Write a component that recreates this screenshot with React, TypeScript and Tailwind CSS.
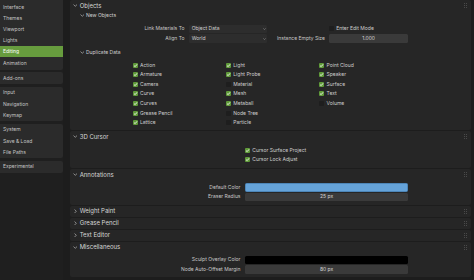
import React from "react";

function Chevron({ open }: { open: boolean }) {
  return open ? (
    <svg width="4.5" height="3" viewBox="0 0 9 6" className="shrink-0">
      <path d="M1 1.2 L4.5 4.6 L8 1.2" fill="none" stroke="#a8a8a8" strokeWidth="1.6" />
    </svg>
  ) : (
    <svg width="3" height="4.5" viewBox="0 0 6 9" className="shrink-0">
      <path d="M1.2 1 L4.6 4.5 L1.2 8" fill="none" stroke="#a8a8a8" strokeWidth="1.6" />
    </svg>
  );
}

function Grip() {
  return (
    <div className="ml-auto mr-[4px] grid grid-cols-2 gap-[1px]">
      {[0, 1, 2, 3, 4, 5].map((i) => (
        <div key={i} className="w-[1px] h-[1px] bg-[#4a4a4a]" />
      ))}
    </div>
  );
}

function Header({ title, open }: { title: string; open: boolean }) {
  return (
    <div className="h-[11px] shrink-0 flex items-center pl-[3px] text-[6px] text-[#d6d6d6]">
      <div className="w-[4.5px] flex justify-center">
        <Chevron open={open} />
      </div>
      <span className="ml-[2.2px]">{title}</span>
      <Grip />
    </div>
  );
}

function SubHeader({ title }: { title: string }) {
  return (
    <div className="h-[9.5px] shrink-0 flex items-center pl-[10px] text-[5px] text-[#d0d0d0]">
      <Chevron open />
      <span className="ml-[1.4px]">{title}</span>
    </div>
  );
}

function Check({ on }: { on: boolean }) {
  return on ? (
    <div className="w-[5px] h-[5px] shrink-0 rounded-[1px] bg-[#5f9a39] flex items-center justify-center">
      <svg width="5" height="5" viewBox="0 0 10 10">
        <path d="M2.2 5.3 L4.3 7.3 L8 2.7" fill="none" stroke="#ffffff" strokeWidth="1.7" />
      </svg>
    </div>
  ) : (
    <div className="w-[5px] h-[5px] shrink-0 rounded-[1px] bg-[#1e1e1e]" />
  );
}

function CheckItem({ on, label }: { on: boolean; label: string }) {
  return (
    <div className="h-[9.67px] flex items-center">
      <Check on={on} />
      <span className="ml-[2.3px] text-[5px] text-[#cfcfcf] whitespace-nowrap">{label}</span>
    </div>
  );
}

function Dropdown({ value }: { value: string }) {
  return (
    <div className="w-[78px] h-full rounded-[1.5px] bg-[#2d2d2d] flex items-center pl-[2.4px] pr-[1.6px] text-[5px] text-[#d0d0d0]">
      <span>{value}</span>
      <svg width="3" height="2" viewBox="0 0 6 4" className="ml-auto">
        <path d="M0.8 0.8 L3 3.2 L5.2 0.8" fill="none" stroke="#9a9a9a" strokeWidth="1.2" />
      </svg>
    </div>
  );
}

function FieldRow({ label, children }: { label: string; children: React.ReactNode }) {
  return (
    <div className="h-[8.5px] flex items-center">
      <div className="w-[170.5px] text-right text-[5px] text-[#c8c8c8] whitespace-nowrap">{label}</div>
      <div className="ml-[4.5px] w-[163.3px] h-full">{children}</div>
    </div>
  );
}

function NumField({ value }: { value: string }) {
  return (
    <div className="w-full h-full rounded-[1.5px] bg-[#3a3a3a] flex items-center justify-center text-[5px] text-[#d4d4d4]">
      {value}
    </div>
  );
}

const sideGroups: string[][] = [
  ["Interface", "Themes", "Viewport", "Lights", "Editing", "Animation"],
  ["Add-ons"],
  ["Input", "Navigation", "Keymap"],
  ["System", "Save & Load", "File Paths"],
  ["Experimental"],
];

const col1: [string, boolean][] = [
  ["Action", true],
  ["Armature", true],
  ["Camera", true],
  ["Curve", true],
  ["Curves", true],
  ["Grease Pencil", true],
  ["Lattice", true],
];
const col2: [string, boolean][] = [
  ["Light", true],
  ["Light Probe", true],
  ["Material", false],
  ["Mesh", true],
  ["Metaball", true],
  ["Node Tree", false],
  ["Particle", false],
];
const col3: [string, boolean][] = [
  ["Point Cloud", true],
  ["Speaker", true],
  ["Surface", true],
  ["Text", true],
  ["Volume", false],
];

export default function App() {
  return (
    <div className="w-[474px] h-[280px] overflow-hidden flex bg-[#1d1d1d] font-['Inter','DejaVu_Sans',sans-serif] leading-none">
      {/* Sidebar */}
      <div className="w-[63px] shrink-0 flex flex-col gap-[2.4px] bg-[#1f1f1f]">
        {sideGroups.map((g, gi) => (
          <div
            key={gi}
            className={
              gi === 0
                ? "bg-[#2b2b2b] rounded-br-[2px] pt-[1.5px] pb-[1.2px]"
                : "bg-[#2b2b2b] rounded-r-[2px] py-[0.5px]"
            }
          >
            {g.map((item) =>
              item === "Editing" ? (
                <div key={item} className="h-[11.2px] flex items-center pl-[3px] bg-[#679c3e] text-[5px] text-white">
                  {item}
                </div>
              ) : (
                <div key={item} className="h-[11.2px] flex items-center pl-[3px] text-[5px] text-[#c4c4c4]">
                  {item}
                </div>
              )
            )}
          </div>
        ))}
      </div>

      {/* Main */}
      <div className="flex-1 pl-[7px] pr-[3px] flex flex-col gap-[1px]">
        {/* Objects */}
        <div className="h-[130px] shrink-0 bg-[#262626] rounded-[2px] flex flex-col">
          <Header title="Objects" open />
          <SubHeader title="New Objects" />
          <div className="pt-[4.2px] flex flex-col gap-[1.1px]">
            <div className="h-[8.5px] flex items-center">
              <div className="w-[114.5px] text-right text-[5px] text-[#c8c8c8] whitespace-nowrap">Link Materials To</div>
              <div className="ml-[4.8px] h-full">
                <Dropdown value="Object Data" />
              </div>
              <div className="w-[61.7px]" />
              <Check on={false} />
              <span className="ml-[2.3px] text-[5px] text-[#cfcfcf] whitespace-nowrap">Enter Edit Mode</span>
            </div>
            <div className="h-[8.5px] flex items-center">
              <div className="w-[114.5px] text-right text-[5px] text-[#c8c8c8] whitespace-nowrap">Align To</div>
              <div className="ml-[4.8px] h-full">
                <Dropdown value="World" />
              </div>
              <div className="w-[57.7px] text-right text-[5px] text-[#c8c8c8] whitespace-nowrap">Instance Empty Size</div>
              <div className="ml-[4px] w-[79.3px] h-full">
                <NumField value="1.000" />
              </div>
            </div>
          </div>
          <div className="mt-[4.75px]">
            <SubHeader title="Duplicate Data" />
          </div>
          <div className="pt-[3.15px] pl-[62.7px] flex">
            <div className="w-[93.3px] flex flex-col">
              {col1.map(([l, on]) => (
                <CheckItem key={l} label={l} on={on} />
              ))}
            </div>
            <div className="w-[93.3px] flex flex-col">
              {col2.map(([l, on]) => (
                <CheckItem key={l} label={l} on={on} />
              ))}
            </div>
            <div className="w-[93.3px] flex flex-col">
              {col3.map(([l, on]) => (
                <CheckItem key={l} label={l} on={on} />
              ))}
            </div>
          </div>
        </div>

        {/* 3D Cursor */}
        <div className="shrink-0 bg-[#262626] rounded-[2px] flex flex-col pb-[3.5px]">
          <Header title="3D Cursor" open />
          <div className="pt-[3.2px] pl-[175px] flex flex-col">
            <CheckItem label="Cursor Surface Project" on />
            <CheckItem label="Cursor Lock Adjust" on />
          </div>
        </div>

        {/* Annotations */}
        <div className="shrink-0 bg-[#262626] rounded-[2px] flex flex-col pb-[3.5px]">
          <Header title="Annotations" open />
          <div className="pt-[3px] flex flex-col gap-[1px]">
            <FieldRow label="Default Color">
              <div className="w-full h-full rounded-[1.5px] bg-[#65a3d9] border-[0.5px] border-[#4d86b8]" />
            </FieldRow>
            <FieldRow label="Eraser Radius">
              <NumField value="25 px" />
            </FieldRow>
          </div>
        </div>

        <div className="shrink-0 bg-[#262626] rounded-[2px]">
          <Header title="Weight Paint" open={false} />
        </div>
        <div className="shrink-0 bg-[#262626] rounded-[2px]">
          <Header title="Grease Pencil" open={false} />
        </div>
        <div className="shrink-0 bg-[#262626] rounded-[2px]">
          <Header title="Text Editor" open={false} />
        </div>

        {/* Miscellaneous */}
        <div className="shrink-0 bg-[#262626] rounded-[2px] flex flex-col pb-[3px]">
          <Header title="Miscellaneous" open />
          <div className="pt-[3px] flex flex-col gap-[1px]">
            <FieldRow label="Sculpt Overlay Color">
              <div className="w-full h-full rounded-[1.5px] bg-[#000000]" />
            </FieldRow>
            <FieldRow label="Node Auto-Offset Margin">
              <NumField value="80 px" />
            </FieldRow>
          </div>
        </div>
      </div>
    </div>
  );
}
